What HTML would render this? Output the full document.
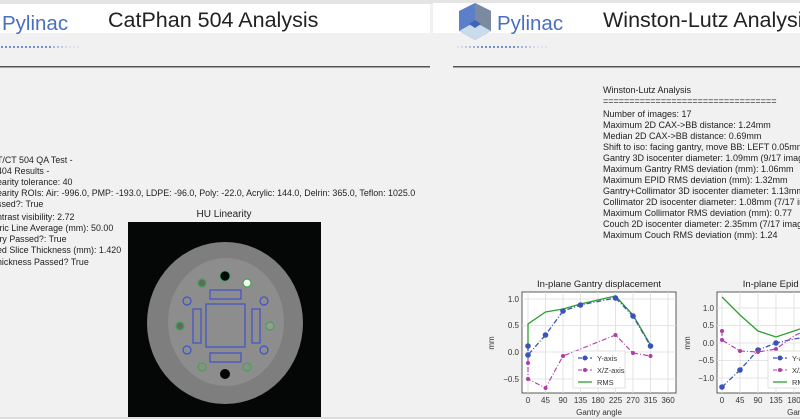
<!DOCTYPE html>
<html><head><meta charset="utf-8"><style>
html,body{margin:0;padding:0;background:#f1f1f1;overflow:hidden}
svg{display:block;font-family:"Liberation Sans",sans-serif}
</style></head><body>
<svg width="800" height="419" viewBox="0 0 800 419" xmlns="http://www.w3.org/2000/svg">
<rect width="800" height="419" fill="#f1f1f1"/>
<rect x="0" y="0" width="800" height="4" fill="#e4e4e4"/>
<rect x="0" y="4" width="430" height="29" fill="#fff"/>
<rect x="433" y="3" width="367" height="30" fill="#fff"/>
<text x="2" y="30" font-size="20.5" fill="#4a6fc0">Pylinac</text>
<g fill="#4a6fc0">
<circle cx="2" cy="47" r="1"/><circle cx="6" cy="47" r="1"/><circle cx="10" cy="47" r="1"/><circle cx="14" cy="47" r="1"/><circle cx="18" cy="47" r="1"/><circle cx="22" cy="47" r="1"/><circle cx="26" cy="47" r="1"/><circle cx="30" cy="47" r="1"/><circle cx="34" cy="47" r="1"/><circle cx="38" cy="47" r="1"/><circle cx="42" cy="47" r="1"/><circle cx="46" cy="47" r="1"/><circle cx="50" cy="47" r="1"/><circle cx="54" cy="47" r="0.8"/><circle cx="58" cy="47" r="0.7"/><circle cx="62" cy="47" r="0.6"/><circle cx="66" cy="47" r="0.5"/><circle cx="70" cy="47" r="0.4"/><circle cx="74" cy="47" r="0.4"/><circle cx="78" cy="47" r="0.4"/>
</g>
<text x="108" y="27" font-size="21.5" fill="#222">CatPhan 504 Analysis</text>
<rect x="0" y="66" width="430" height="1.5" fill="#555"/>
<polygon points="475,3 491,11 491,31 475,40 459,31 459,11" fill="#5b7fc8"/>
<polygon points="475,3 491,11 491,31 475,22" fill="#7b8aa0"/>
<polygon points="459,31 475,22 491,31 475,40" fill="#c9dcec"/>
<polygon points="469,24 475,20 481,24 475,28" fill="#3f64b8"/>
<text x="497" y="30" font-size="20.5" fill="#4a6fc0">Pylinac</text>
<g fill="#4a6fc0">
<circle cx="458" cy="47" r="0.4"/><circle cx="462" cy="47" r="0.5"/><circle cx="466" cy="47" r="0.6"/><circle cx="470" cy="47" r="0.7"/><circle cx="474" cy="47" r="0.8"/><circle cx="478" cy="47" r="0.9"/><circle cx="482" cy="47" r="1"/><circle cx="486" cy="47" r="1"/><circle cx="490" cy="47" r="1"/><circle cx="494" cy="47" r="1"/><circle cx="498" cy="47" r="1"/><circle cx="502" cy="47" r="1"/><circle cx="506" cy="47" r="1"/><circle cx="510" cy="47" r="1"/><circle cx="514" cy="47" r="1"/><circle cx="518" cy="47" r="0.9"/><circle cx="522" cy="47" r="0.8"/><circle cx="526" cy="47" r="0.7"/><circle cx="530" cy="47" r="0.6"/><circle cx="534" cy="47" r="0.5"/><circle cx="538" cy="47" r="0.4"/><circle cx="542" cy="47" r="0.4"/><circle cx="546" cy="47" r="0.4"/>
</g>
<text x="603" y="27" font-size="21.5" fill="#222">Winston-Lutz Analysis</text>
<rect x="453" y="66" width="347" height="1.5" fill="#555"/>
<g font-size="8.9" fill="#222">
<text x="-3" y="163">T/CT 504 QA Test -</text>
<text x="-3" y="174">404 Results -</text>
<text x="-3" y="185">earity tolerance: 40</text>
<text x="-3" y="196">earity ROIs: Air: -996.0, PMP: -193.0, LDPE: -96.0, Poly: -22.0, Acrylic: 144.0, Delrin: 365.0, Teflon: 1025.0</text>
<text x="-3" y="207">ssed?: True</text>
<text x="-3" y="220">ntrast visibility: 2.72</text>
<text x="-3" y="231">tric Line Average (mm): 50.00</text>
<text x="-3" y="242">try Passed?: True</text>
<text x="-3" y="253">ed Slice Thickness (mm): 1.420</text>
<text x="-3" y="265">hickness Passed? True</text>
</g>
<text x="224" y="217" font-size="10" fill="#222" text-anchor="middle">HU Linearity</text>
<rect x="128" y="222" width="193" height="197" fill="#050707"/>
<ellipse cx="225" cy="323" rx="78" ry="81" fill="#7e7e7e"/>
<ellipse cx="226" cy="322" rx="58" ry="64" fill="#8d8d8d"/>
<g fill="none" stroke="#3f52c8" stroke-width="1.2">
<rect x="206" y="304" width="39" height="43"/>
<rect x="210" y="290" width="31" height="9"/>
<rect x="210" y="353" width="31" height="9"/>
<rect x="193" y="309" width="8" height="34"/>
<rect x="252" y="309" width="8" height="34"/>
<circle cx="187" cy="301" r="4"/><circle cx="264" cy="301" r="4"/>
<circle cx="187" cy="350" r="4"/><circle cx="264" cy="350" r="4"/>
</g>
<g stroke="#3ea84a" stroke-width="1.2">
<circle cx="202" cy="283" r="4" fill="#666"/>
<circle cx="247" cy="283" r="4" fill="#fff"/>
<circle cx="180" cy="326" r="4" fill="#666"/>
<circle cx="270" cy="326" r="4" fill="#999"/>
<circle cx="202" cy="367" r="4" fill="#8d8d8d"/>
<circle cx="247" cy="367" r="4" fill="#8d8d8d"/>
</g>
<circle cx="225" cy="276" r="5" fill="#050707" stroke="#3a6" stroke-width="0.8"/>
<circle cx="225" cy="374" r="5" fill="#050707"/>
<g font-size="9" fill="#222">
<text x="603" y="93">Winston-Lutz Analysis</text>
<text x="603" y="104">=================================</text>
<text x="603" y="117">Number of images: 17</text>
<text x="603" y="128">Maximum 2D CAX-&gt;BB distance: 1.24mm</text>
<text x="603" y="139">Median 2D CAX-&gt;BB distance: 0.69mm</text>
<text x="603" y="150">Shift to iso: facing gantry, move BB: LEFT 0.05mm</text>
<text x="603" y="161">Gantry 3D isocenter diameter: 1.09mm (9/17 images)</text>
<text x="603" y="172">Maximum Gantry RMS deviation (mm): 1.06mm</text>
<text x="603" y="183">Maximum EPID RMS deviation (mm): 1.32mm</text>
<text x="603" y="194">Gantry+Collimator 3D isocenter diameter: 1.13mm</text>
<text x="603" y="205">Collimator 2D isocenter diameter: 1.08mm (7/17 images)</text>
<text x="603" y="216">Maximum Collimator RMS deviation (mm): 0.77</text>
<text x="603" y="227">Couch 2D isocenter diameter: 2.35mm (7/17 images)</text>
<text x="603" y="238">Maximum Couch RMS deviation (mm): 1.24</text>
</g>
<text x="599" y="287" font-size="9.5" fill="#222" text-anchor="middle">In-plane Gantry displacement</text>
<rect x="522" y="292" width="154" height="101" fill="#fff" stroke="#333" stroke-width="0.8"/>
<g stroke="#ddd" stroke-width="0.8">
<line x1="528" y1="292" x2="528" y2="393"/><line x1="545.5" y1="292" x2="545.5" y2="393"/><line x1="563" y1="292" x2="563" y2="393"/><line x1="580.5" y1="292" x2="580.5" y2="393"/><line x1="598" y1="292" x2="598" y2="393"/><line x1="615.5" y1="292" x2="615.5" y2="393"/><line x1="633" y1="292" x2="633" y2="393"/><line x1="650.5" y1="292" x2="650.5" y2="393"/><line x1="668" y1="292" x2="668" y2="393"/>
<line x1="522" y1="299" x2="676" y2="299"/><line x1="522" y1="325.5" x2="676" y2="325.5"/><line x1="522" y1="352" x2="676" y2="352"/><line x1="522" y1="379" x2="676" y2="379"/>
</g>
<g font-size="8" fill="#333" text-anchor="end">
<text x="519" y="302">1.0</text><text x="519" y="328">0.5</text><text x="519" y="355">0.0</text><text x="519" y="382">−0.5</text>
</g>
<g font-size="8" fill="#333" text-anchor="middle">
<text x="528" y="403">0</text><text x="545.5" y="403">45</text><text x="563" y="403">90</text><text x="580.5" y="403">135</text><text x="598" y="403">180</text><text x="615.5" y="403">225</text><text x="633" y="403">270</text><text x="650.5" y="403">315</text><text x="668" y="403">360</text>
<text x="599" y="415">Gantry angle</text>
</g>
<text x="494" y="343" font-size="8" fill="#333" transform="rotate(-90 494 343)" text-anchor="middle">mm</text>
<polyline points="528,344 528,324 545.5,312 563,309 580.5,304 615.5,296 633,315 650.5,345" fill="none" stroke="#2ca02c" stroke-width="1.3"/>
<polyline points="528,346 528,355 545.5,335 563,311 580.5,305 615.5,298 633,316 650.5,346" fill="none" stroke="#3a53b8" stroke-width="1.3" stroke-dasharray="5,2,1,2"/>
<g fill="#3a53b8"><circle cx="528" cy="346" r="2.8"/><circle cx="528" cy="355" r="2.8"/><circle cx="545.5" cy="335" r="2.8"/><circle cx="563" cy="311" r="2.8"/><circle cx="580.5" cy="305" r="2.8"/><circle cx="615.5" cy="298" r="2.8"/><circle cx="633" cy="316" r="2.8"/><circle cx="650.5" cy="346" r="2.8"/></g>
<polyline points="528,357 528,363 528,379 545.5,388 563,356 615.5,335 633,353 650.5,356" fill="none" stroke="#b03aa8" stroke-width="1.1" stroke-dasharray="5,2,1,2"/>
<g fill="#b03aa8"><circle cx="528" cy="363" r="2"/><circle cx="528" cy="379" r="2"/><circle cx="545.5" cy="388" r="2"/><circle cx="563" cy="356" r="2"/><circle cx="615.5" cy="335" r="2"/><circle cx="633" cy="353" r="2"/><circle cx="650.5" cy="356" r="2"/></g>
<rect x="573" y="351" width="52" height="37" fill="#fff" stroke="#ccc" stroke-width="0.6"/>
<g font-size="7.5" fill="#333"><text x="597" y="361">Y-axis</text><text x="597" y="373">X/Z-axis</text><text x="597" y="385">RMS</text></g>
<line x1="578" y1="358" x2="592" y2="358" stroke="#3a53b8" stroke-width="1.3" stroke-dasharray="4,2"/><circle cx="585" cy="358" r="2.5" fill="#3a53b8"/>
<line x1="578" y1="370" x2="592" y2="370" stroke="#b03aa8" stroke-width="1.1" stroke-dasharray="4,2"/><circle cx="585" cy="370" r="2" fill="#b03aa8"/>
<line x1="578" y1="382" x2="592" y2="382" stroke="#2ca02c" stroke-width="1.3"/>
<text x="800" y="287" font-size="9.5" fill="#222" text-anchor="middle">In-plane Epid displacement</text>
<rect x="717" y="292" width="100" height="101" fill="#fff" stroke="#333" stroke-width="0.8"/>
<g stroke="#ddd" stroke-width="0.8">
<line x1="722" y1="292" x2="722" y2="393"/><line x1="740" y1="292" x2="740" y2="393"/><line x1="758" y1="292" x2="758" y2="393"/><line x1="776" y1="292" x2="776" y2="393"/><line x1="794" y1="292" x2="794" y2="393"/>
<line x1="717" y1="308" x2="800" y2="308"/><line x1="717" y1="325.5" x2="800" y2="325.5"/><line x1="717" y1="343" x2="800" y2="343"/><line x1="717" y1="360.5" x2="800" y2="360.5"/><line x1="717" y1="378" x2="800" y2="378"/>
</g>
<g font-size="8" fill="#333" text-anchor="end">
<text x="714" y="311">1.0</text><text x="714" y="328">0.5</text><text x="714" y="346">0.0</text><text x="714" y="363">−0.5</text><text x="714" y="381">−1.0</text>
</g>
<g font-size="8" fill="#333" text-anchor="middle">
<text x="722" y="403">0</text><text x="740" y="403">45</text><text x="758" y="403">90</text><text x="776" y="403">135</text><text x="794" y="403">180</text>
<text x="810" y="415">Gantry angle</text>
</g>
<text x="690" y="343" font-size="8" fill="#333" transform="rotate(-90 690 343)" text-anchor="middle">mm</text>
<polyline points="722,297 740,315 758,331 776,337 794,331 800,329" fill="none" stroke="#2ca02c" stroke-width="1.3"/>
<polyline points="722,387 740,370 758,350 776,343 794,339 800,338" fill="none" stroke="#3a53b8" stroke-width="1.3" stroke-dasharray="5,2,1,2"/>
<g fill="#3a53b8"><circle cx="722" cy="387" r="2.8"/><circle cx="740" cy="370" r="2.8"/><circle cx="758" cy="350" r="2.8"/><circle cx="776" cy="343" r="2.8"/></g>
<polyline points="722,331 722,340 740,351 758,352 776,349 794,336 800,333" fill="none" stroke="#b03aa8" stroke-width="1.1" stroke-dasharray="5,2,1,2"/>
<g fill="#b03aa8"><circle cx="722" cy="331" r="2"/><circle cx="722" cy="340" r="2"/><circle cx="740" cy="351" r="2"/><circle cx="758" cy="352" r="2"/><circle cx="776" cy="349" r="2"/></g>
<rect x="768" y="351" width="40" height="37" fill="#fff" stroke="#ccc" stroke-width="0.6"/>
<g font-size="7.5" fill="#333"><text x="792" y="361">Y-axis</text><text x="792" y="373">X/Z-axis</text><text x="792" y="385">RMS</text></g>
<line x1="773" y1="358" x2="787" y2="358" stroke="#3a53b8" stroke-width="1.3" stroke-dasharray="4,2"/><circle cx="780" cy="358" r="2.5" fill="#3a53b8"/>
<line x1="773" y1="370" x2="787" y2="370" stroke="#b03aa8" stroke-width="1.1" stroke-dasharray="4,2"/><circle cx="780" cy="370" r="2" fill="#b03aa8"/>
<line x1="773" y1="382" x2="787" y2="382" stroke="#2ca02c" stroke-width="1.3"/>
<rect x="0" y="417" width="800" height="2" fill="#ddd"/>
</svg>
</body></html>
